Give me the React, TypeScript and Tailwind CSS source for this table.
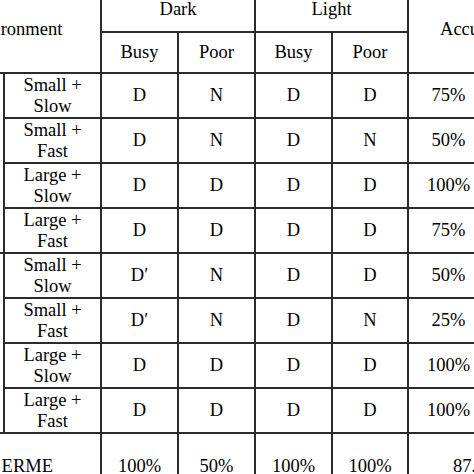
import React from "react";

const rows = [
  ["Small +", "Slow", "D", "N", "D", "D", "75%"],
  ["Small +", "Fast", "D", "N", "D", "N", "50%"],
  ["Large +", "Slow", "D", "D", "D", "D", "100%"],
  ["Large +", "Fast", "D", "D", "D", "D", "75%"],
  ["Small +", "Slow", "D\u2032", "N", "D", "D", "50%"],
  ["Small +", "Fast", "D\u2032", "N", "D", "N", "25%"],
  ["Large +", "Slow", "D", "D", "D", "D", "100%"],
  ["Large +", "Fast", "D", "D", "D", "D", "100%"],
];

const cell = "border-2 border-[#2b2b2b] p-0 text-center align-middle";

export default function App() {
  return (
    <div
      className="w-[474px] h-[474px] overflow-hidden bg-white text-black"
      style={{ fontFamily: '"Liberation Serif", "Times New Roman", serif' }}
    >
      <table className="table-fixed w-[631px] border-collapse ml-[-74px] mt-[-15px] text-[18.5px] leading-[21px]">
        <colgroup>
          <col className="w-[77px]" />
          <col className="w-[97px]" />
          <col className="w-[77px]" />
          <col className="w-[77px]" />
          <col className="w-[77px]" />
          <col className="w-[76px]" />
          <col className="w-[150px]" />
        </colgroup>
        <thead>
          <tr className="h-[46px]">
            <td className={cell} rowSpan={2} colSpan={2}>
              Environment
            </td>
            <td className={cell} colSpan={2}>Dark</td>
            <td className={cell} colSpan={2}>Light</td>
            <td className={cell + " !text-left pl-[31px]"} rowSpan={2}>
              Accuracy
            </td>
          </tr>
          <tr className="h-[41px]">
            <td className={cell}>Busy</td>
            <td className={cell}>Poor</td>
            <td className={cell}>Busy</td>
            <td className={cell}>Poor</td>
          </tr>
        </thead>
        <tbody>
          {rows.map((r, i) => (
            <tr key={i} className="h-[45px]">
              {i % 4 === 0 && (
                <td className={cell} rowSpan={4}>
                  {i === 0 ? "Static" : "Dynamic"}
                </td>
              )}
              <td className={cell}>
                {r[0]}
                <br />
                {r[1]}
              </td>
              <td className={cell}>{r[2]}</td>
              <td className={cell}>{r[3]}</td>
              <td className={cell}>{r[4]}</td>
              <td className={cell}>{r[5]}</td>
              <td className={cell + " !text-left"}>
                <div className="w-[79px] text-center">{r[6]}</div>
              </td>
            </tr>
          ))}
          <tr className="h-[66px]">
            <td className={cell + " !text-right pr-[47px]"} colSpan={2}>
              ERME
            </td>
            <td className={cell}>100%</td>
            <td className={cell}>50%</td>
            <td className={cell}>100%</td>
            <td className={cell}>100%</td>
            <td className={cell + " !text-left pl-[44px]"}>87.5%</td>
          </tr>
        </tbody>
      </table>
    </div>
  );
}
